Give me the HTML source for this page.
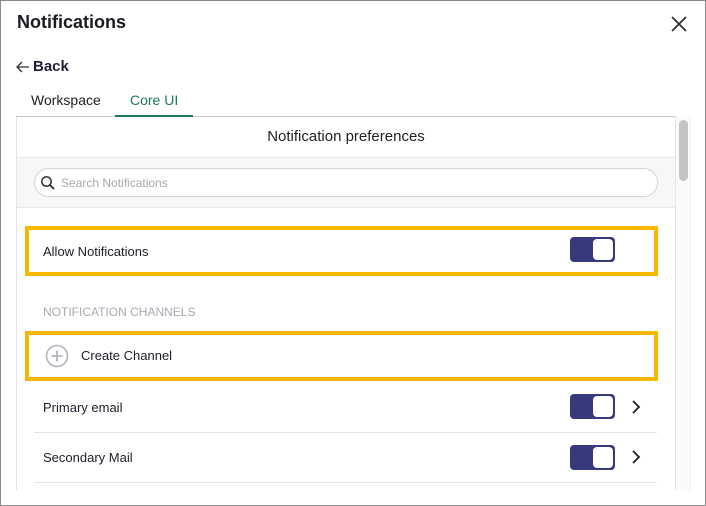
<!DOCTYPE html>
<html><head><style>
*{box-sizing:border-box;margin:0;padding:0}
body{width:706px;height:506px;overflow:hidden;background:#fff;font-family:"Liberation Sans",sans-serif;color:#1d1d2b;position:relative}
.frame{position:absolute;left:0;top:0;width:706px;height:506px;border:1px solid #8a8a8a}
.abs{position:absolute}
.toggle{position:absolute;width:45px;height:25px;background:#363a7c;border-radius:4px}
.toggle::after{content:"";position:absolute;right:2px;top:2px;width:20px;height:21px;background:#fff;border-radius:4px}
.yb{position:absolute;left:25px;width:633px;height:50px;border:4px solid #f8b800}
.row{position:absolute;left:43px;font-size:13px}
.div{position:absolute;left:34px;width:623px;height:1px;background:#e4e4e8}
</style></head><body>
<div class="frame"></div>
<div class="abs" style="left:17px;top:12px;font-size:18px;font-weight:bold;color:#1a1a22">Notifications</div>
<svg class="abs" style="left:670px;top:15px" width="18" height="18" viewBox="0 0 18 18"><path d="M2 2L16 16M16 2L2 16" stroke="#333" stroke-width="1.8"/></svg>
<svg class="abs" style="left:16px;top:61px" width="14" height="12" viewBox="0 0 14 12"><path d="M13 6H2M6 1L1 6L6 11" stroke="#333" stroke-width="1.3" fill="none"/></svg>
<div class="abs" style="left:33px;top:58px;font-size:15px;font-weight:bold;color:#1e1e3c">Back</div>
<div class="abs" style="left:31px;top:92px;font-size:14px;color:#222">Workspace</div>
<div class="abs" style="left:130px;top:92px;font-size:14px;color:#1a7a55">Core UI</div>
<div class="abs" style="left:16px;top:116px;width:660px;height:1px;background:#c8c8cc"></div>
<div class="abs" style="left:115px;top:115px;width:78px;height:2px;background:#1a7a55"></div>
<div class="abs" style="left:16px;top:117px;width:1px;height:373px;background:#e4e4e4"></div>
<div class="abs" style="left:675px;top:117px;width:1px;height:373px;background:#e4e4e4"></div>
<div class="abs" style="left:676px;top:117px;width:15px;height:373px;background:#fafafa;border-right:1px solid #eee"></div>
<div class="abs" style="left:679px;top:120px;width:9px;height:61px;background:#c4c4c4;border-radius:5px"></div>
<div class="abs" style="left:16px;top:128px;width:660px;text-align:center;font-size:15px;color:#222">Notification preferences</div>
<div class="abs" style="left:17px;top:157px;width:658px;height:51px;background:#f7f7f7;border-top:1px solid #e8e8e8;border-bottom:1px solid #e8e8e8"></div>
<div class="abs" style="left:34px;top:168px;width:624px;height:29px;border:1px solid #d4d4d8;border-radius:15px;background:#fff"></div>
<svg class="abs" style="left:40px;top:175px" width="16" height="16" viewBox="0 0 16 16"><circle cx="6.5" cy="6.5" r="4.7" stroke="#222" stroke-width="1.4" fill="none"/><path d="M10 10L14 14" stroke="#222" stroke-width="1.6"/></svg>
<div class="abs" style="left:61px;top:176px;font-size:12px;color:#a8a8b0">Search Notifications</div>
<div class="yb" style="top:226px"></div>
<div class="row" style="top:244px">Allow Notifications</div>
<div class="toggle" style="left:570px;top:237px"></div>
<div class="abs" style="left:43px;top:305px;font-size:12px;color:#a8a8b4">NOTIFICATION CHANNELS</div>
<div class="yb" style="top:331px"></div>
<svg class="abs" style="left:45px;top:344px" width="24" height="24" viewBox="0 0 24 24"><circle cx="12" cy="12" r="10.5" stroke="#b4b4c0" stroke-width="1.6" fill="none"/><path d="M12 6.5V17.5M6.5 12H17.5" stroke="#b4b4c0" stroke-width="1.8"/></svg>
<div class="row" style="left:81px;top:348px">Create Channel</div>
<div class="row" style="top:400px">Primary email</div>
<div class="toggle" style="left:570px;top:394px"></div>
<svg class="abs" style="left:631px;top:399px" width="10" height="16" viewBox="0 0 10 16"><path d="M2 2L8 8L2 14" stroke="#222" stroke-width="1.8" fill="none"/></svg>
<div class="div" style="top:432px"></div>
<div class="row" style="top:450px">Secondary Mail</div>
<div class="toggle" style="left:570px;top:445px"></div>
<svg class="abs" style="left:631px;top:449px" width="10" height="16" viewBox="0 0 10 16"><path d="M2 2L8 8L2 14" stroke="#222" stroke-width="1.8" fill="none"/></svg>
<div class="div" style="top:482px"></div>
</body></html>
